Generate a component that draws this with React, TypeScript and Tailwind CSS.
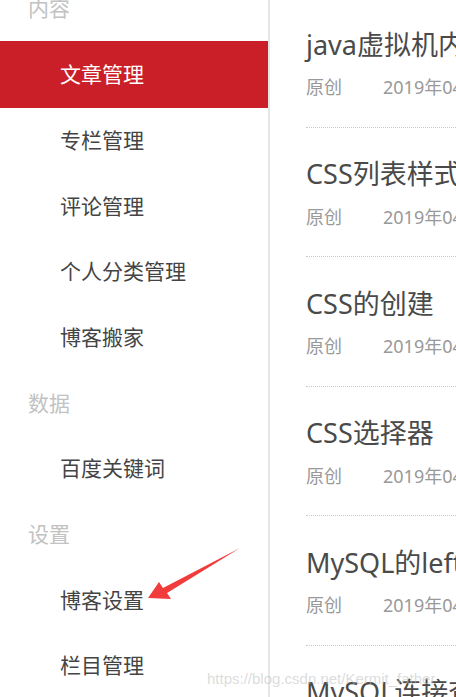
import React from "react";

type Row = { kind: "header" | "item"; text: string; active?: boolean };

const rows: Row[] = [
  { kind: "header", text: "内容" },
  { kind: "item", text: "文章管理", active: true },
  { kind: "item", text: "专栏管理" },
  { kind: "item", text: "评论管理" },
  { kind: "item", text: "个人分类管理" },
  { kind: "item", text: "博客搬家" },
  { kind: "header", text: "数据" },
  { kind: "item", text: "百度关键词" },
  { kind: "header", text: "设置" },
  { kind: "item", text: "博客设置" },
  { kind: "item", text: "栏目管理" },
];

const posts = [
  { title: "java虚拟机内存区域", date: "2019年04月15日 20:31:22" },
  { title: "CSS列表样式", date: "2019年04月12日 19:02:10" },
  { title: "CSS的创建", date: "2019年04月10日 21:15:44" },
  { title: "CSS选择器", date: "2019年04月09日 18:40:03" },
  { title: "MySQL的left join", date: "2019年04月05日 16:22:51" },
  { title: "MySQL连接查询", date: "2019年04月02日 15:11:36" },
];

const font = { fontFamily: '"Noto Sans", "Noto Sans CJK SC", sans-serif' };

export default function App() {
  return (
    <div
      className="relative w-[456px] h-[697px] overflow-hidden bg-white flex"
      style={font}
    >
      {/* sidebar */}
      <div className="w-[268px] shrink-0 flex flex-col -mt-[25px]">
        {rows.map((r, i) =>
          r.kind === "header" ? (
            <div
              key={i}
              className="h-[66px] shrink-0 flex items-center pl-[28px] text-[21px] text-[#c2c2c2] leading-none"
            >
              {r.text}
            </div>
          ) : (
            <div
              key={i}
              className={
                r.active
                  ? "h-[67px] shrink-0 flex items-center pl-[60px] text-[21px] leading-none bg-[#ca1f28] text-white"
                  : "h-[65.5px] shrink-0 flex items-center pl-[60px] text-[21px] leading-none text-[#444]"
              }
            >
              {r.text}
            </div>
          )
        )}
      </div>
      {/* divider */}
      <div className="w-[2px] shrink-0 bg-[#e6e6e6]" />
      {/* content */}
      <div className="flex-1 min-w-0 pl-[36px] flex flex-col -mt-[2px]">
        {posts.map((p, i) => (
          <div
            key={i}
            className="shrink-0 pt-[28px] pb-[27.5px] border-b border-dotted border-[#c8c8c8] w-[400px]"
          >
            <div className="h-[36px] flex items-center text-[27px] text-[#4a4a4a] whitespace-nowrap leading-none">
              {p.title}
            </div>
            <div className="mt-[13px] h-[24px] flex items-center text-[18px] text-[#999] whitespace-nowrap leading-none">
              <span className="w-[77px] shrink-0">原创</span>
              <span>{p.date}</span>
            </div>
          </div>
        ))}
      </div>

      {/* red annotation arrow */}
      <svg
        className="absolute left-0 top-0 pointer-events-none"
        width="456"
        height="697"
        viewBox="0 0 456 697"
      >
        <polygon
          points="148,598 159,582 163,588 240,548 167,593 171,599"
          fill="#f23b3b"
        />
      </svg>

      {/* watermark */}
      <div
        className="absolute left-[207px] top-[668px] text-[15px] whitespace-nowrap text-[rgba(190,190,190,0.55)] pointer-events-none"
        style={{ fontFamily: '"Liberation Sans", Arial, sans-serif' }}
      >
        https://blog.csdn.net/Kermit_father
      </div>
    </div>
  );
}
